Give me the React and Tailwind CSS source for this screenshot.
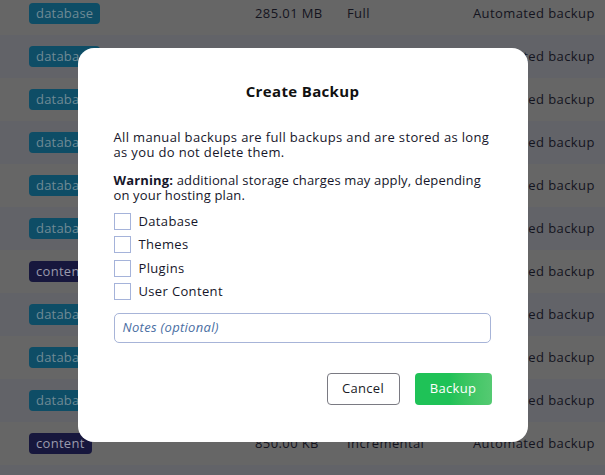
import React from "react";

const rows = [
  { tag: "database", size: "285.01 MB", type: "Full", desc: "Automated backup" },
  { tag: "database", size: "284.77 MB", type: "Full", desc: "Automated backup" },
  { tag: "database", size: "284.52 MB", type: "Full", desc: "Automated backup" },
  { tag: "database", size: "284.10 MB", type: "Full", desc: "Automated backup" },
  { tag: "database", size: "283.96 MB", type: "Full", desc: "Automated backup" },
  { tag: "database", size: "283.41 MB", type: "Full", desc: "Automated backup" },
  { tag: "content", size: "1.20 MB", type: "Incremental", desc: "Automated backup" },
  { tag: "database", size: "282.88 MB", type: "Full", desc: "Automated backup" },
  { tag: "database", size: "282.35 MB", type: "Full", desc: "Automated backup" },
  { tag: "database", size: "281.90 MB", type: "Full", desc: "Automated backup" },
  { tag: "content", size: "850.00 KB", type: "Incremental", desc: "Automated backup" },
  { tag: "database", size: "281.12 MB", type: "Full", desc: "Automated backup" },
];

function Badge({ tag }) {
  if (tag === "content") {
    return (
      <span className="inline-flex h-[21px] items-center rounded-[4px] bg-[#17173d] px-[7px] text-[13px] tracking-[0.3px] text-[#9a9aac]">
        {tag}
      </span>
    );
  }
  return (
    <span className="inline-flex h-[21px] items-center rounded-[4px] bg-[#0e4d66] px-[7px] text-[13px] tracking-[0.2px] text-[#6f8a95]">
      {tag}
    </span>
  );
}

function Check({ label }) {
  return (
    <label className="flex h-[17px] items-center gap-[8px]">
      <span className="h-[17px] w-[17px] shrink-0 border border-[#a5b3da] bg-white" />
      <span className="text-[13px] leading-[17px] tracking-[0.35px] text-[#16162a]">{label}</span>
    </label>
  );
}

export default function App() {
  return (
    <div
      className="relative h-[475px] w-[605px] overflow-hidden bg-[#666666]"
      style={{ fontFamily: '"Open Sans", "Noto Sans", sans-serif' }}
    >
      <div className="mt-[-8px] flex flex-col">
        {rows.map((r, i) => (
          <div
            key={i}
            className={
              "flex h-[43px] items-center pl-[29px] text-[13px] tracking-[0.4px] text-[#14141e] " +
              (i % 2 === 0 ? "bg-[#666666]" : "bg-[#626368]")
            }
          >
            <div className="w-[226px]">
              <Badge tag={r.tag} />
            </div>
            <div className="w-[92px]">{r.size}</div>
            <div className="w-[126px]">{r.type}</div>
            <div className="whitespace-nowrap">{r.desc}</div>
          </div>
        ))}
      </div>

      <div className="absolute inset-0 flex items-start justify-center pt-[48px]">
        <div className="w-[450px] rounded-[16px] bg-white px-[36px] pb-[37px] pt-[33px] text-[#16162a]">
          <h2 className="text-center text-[15px] font-bold leading-[20px] tracking-[0.35px] text-[#111]">
            Create Backup
          </h2>
          <p className="mt-[29px] text-[13px] leading-[14.5px] tracking-[0.35px]">
            All manual backups are full backups and are stored as long as you do not delete them.
          </p>
          <p className="mt-[14px] text-[13px] leading-[14.5px] tracking-[0.15px]">
            <span className="font-bold">Warning:</span> additional storage charges may apply, depending on your hosting plan.
          </p>
          <div className="mt-[11px] flex flex-col gap-[6.3px]">
            <Check label="Database" />
            <Check label="Themes" />
            <Check label="Plugins" />
            <Check label="User Content" />
          </div>
          <div className="mt-[13px] flex h-[30px] w-[377px] items-center rounded-[5px] border border-[#a7b4d8] px-[8px]">
            <span className="text-[13px] italic tracking-[0.3px] text-[#4a6ea3]">Notes (optional)</span>
          </div>
          <div className="mt-[30px] flex justify-end gap-[15px]">
            <button className="h-[32px] w-[73px] rounded-[4px] border border-[#7a7a82] bg-white text-[13px] tracking-[0.3px] text-[#1a1a26]">
              Cancel
            </button>
            <button className="h-[32px] w-[77px] rounded-[4px] bg-gradient-to-r from-[#1fc257] from-45% to-[#55ca72] text-[13px] tracking-[0.3px] text-white">
              Backup
            </button>
          </div>
        </div>
      </div>
    </div>
  );
}
